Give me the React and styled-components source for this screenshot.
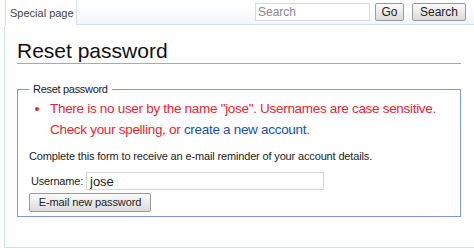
import React from "react";
import styled, { createGlobalStyle } from "styled-components";

const GlobalStyle = createGlobalStyle`
  html, body {
    margin: 0;
    padding: 0;
    background: #ffffff;
  }
  body {
    font-family: Arial, "Liberation Sans", sans-serif;
    color: #222;
    width: 474px;
    height: 252px;
    overflow: hidden;
  }
`;

const TopBar = styled.div`
  display: flex;
  height: 25px;
  padding-left: 5px;
`;

const Tab = styled.div`
  width: 72px;
  height: 25px;
  box-sizing: border-box;
  border-left: 1px solid #c9dcf1;
  border-right: 1px solid #d3e2f2;
  background: #ffffff;
  font-size: 11px;
  color: #444;
  padding: 7px 0 0 4px;
  white-space: nowrap;
`;

const Filler = styled.div`
  flex: 1;
  display: flex;
  justify-content: flex-end;
  align-items: flex-start;
  padding: 3px 8px 0 0;
  background: linear-gradient(#ffffff 20%, #f3f5f8);
  border-bottom: 1px solid #cfe0f2;
`;

const SearchInput = styled.input`
  width: 115px;
  height: 18px;
  box-sizing: border-box;
  border: 1px solid #dadada;
  padding: 0 2px;
  font-family: Arial, "Liberation Sans", sans-serif;
  font-size: 12px;
  color: #888;
  margin-right: 5px;
  &::placeholder {
    color: #8a8a8a;
  }
`;

const Button = styled.button`
  width: ${(p) => p.$w}px;
  height: ${(p) => p.$h || 18}px;
  margin-left: ${(p) => p.$ml || 0}px;
  box-sizing: border-box;
  border: 1px solid #9a9a9a;
  border-radius: 2px;
  background: linear-gradient(#fbfbfb, #dadada);
  font-family: Arial, "Liberation Sans", sans-serif;
  font-size: 12px;
  color: #222;
  padding: 0;
  line-height: 1;
`;

const Content = styled.div`
  margin-left: 4px;
  height: 223px;
  box-sizing: border-box;
  border-left: 1px solid #cfe0f2;
  border-bottom: 1px solid #cfe0f2;
  padding: 14px 13px 0 12px;
`;

const Heading = styled.h1`
  margin: 0;
  font-weight: normal;
  font-size: 21px;
  color: #111;
  line-height: 23px;
  padding-bottom: 1px;
  border-bottom: 1px solid #aaaaaa;
`;

const Fieldset = styled.fieldset`
  margin: 19px 0 0 0;
  padding: 0 11px 0 11px;
  height: 134px;
  box-sizing: border-box;
  border: 1px solid #7d9bd1;
`;

const Legend = styled.legend`
  font-size: 11px;
  letter-spacing: -0.3px;
  color: #222;
  padding: 0 4px;
  margin-left: 0;
`;

const ErrorList = styled.ul`
  margin: 3px 0 0 0;
  padding-left: 21px;
  color: #e3262e;
  font-size: 13.5px;
  letter-spacing: -0.3px;
  line-height: 21px;
  white-space: nowrap;
`;

const Link = styled.a`
  color: #1a4ea8;
  text-decoration: none;
`;

const Note = styled.p`
  margin: 9px 0 0 0;
  font-size: 11px;
  letter-spacing: -0.15px;
  line-height: 14px;
  color: #222;
`;

const Row = styled.div`
  display: flex;
  align-items: center;
  gap: 3px;
  margin-top: 9px;
  padding-left: 2px;
  font-size: 11px;
  letter-spacing: -0.2px;
`;

const UserInput = styled.input`
  width: 238px;
  height: 18px;
  box-sizing: border-box;
  border: 1px solid #d6d6d6;
  padding: 0 3px;
  font-family: Arial, "Liberation Sans", sans-serif;
  font-size: 13px;
  color: #222;
`;

const SubmitRow = styled.div`
  margin-top: 3px;
  display: flex;
`;

const SubmitButton = styled(Button)`
  font-size: 11px;
  letter-spacing: -0.1px;
`;

export default function App() {
  return (
    <>
      <GlobalStyle />
      <TopBar>
        <Tab>Special page</Tab>
        <Filler>
          <SearchInput placeholder="Search" />
          <Button $w={29}>Go</Button>
          <Button $w={54} $ml={8}>Search</Button>
        </Filler>
      </TopBar>
      <Content>
        <Heading>Reset password</Heading>
        <Fieldset>
          <Legend>Reset password</Legend>
          <ErrorList>
            <li>
              There is no user by the name "jose". Usernames are case sensitive.
              <br />
              Check your spelling, or <Link href="#">create a new account</Link>.
            </li>
          </ErrorList>
          <Note>Complete this form to receive an e-mail reminder of your account details.</Note>
          <Row>
            <span>Username:</span>
            <UserInput defaultValue="jose" />
          </Row>
          <SubmitRow>
            <SubmitButton $w={122} $h={19}>E-mail new password</SubmitButton>
          </SubmitRow>
        </Fieldset>
      </Content>
    </>
  );
}
